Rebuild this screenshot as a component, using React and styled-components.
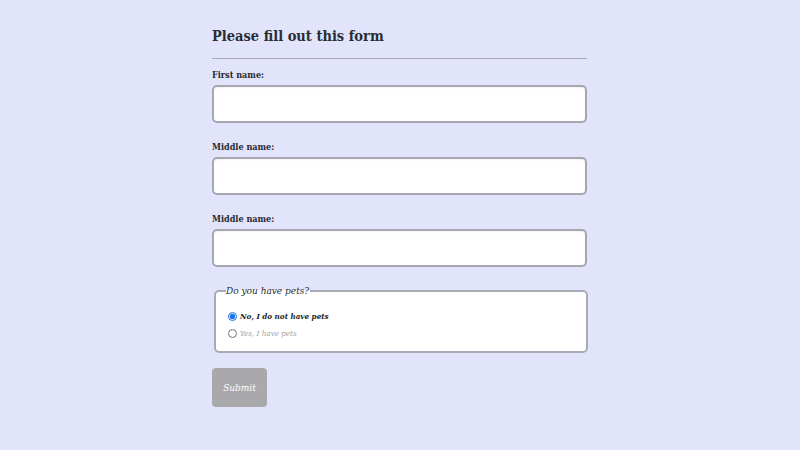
import React from "react";
import styled, { createGlobalStyle } from "styled-components";

const Global = createGlobalStyle`
  html, body { margin: 0; padding: 0; background: #e1e4fb; }
  body {
    font-family: "DejaVu Serif Condensed", "DejaVu Serif", serif;
    font-stretch: condensed;
    color: #222;
  }
`;

const Page = styled.div`
  width: 800px;
  height: 450px;
  display: flex;
  box-sizing: border-box;
  padding: 26px 0 0 212px;
`;

const Form = styled.form`
  width: 375px;
  display: flex;
  flex-direction: column;
`;

const Title = styled.h1`
  margin: 0;
  font-size: 14.5px;
  line-height: 20px;
  font-weight: bold;
  color: #2b2d35;
`;

const Rule = styled.hr`
  margin: 12px 0 0;
  border: none;
  border-top: 1px solid #a9aab4;
`;

const Field = styled.div`
  display: flex;
  flex-direction: column;
  margin-top: ${(p) => p.$top}px;
`;

const Label = styled.label`
  font-size: 9px;
  font-weight: bold;
  line-height: 12px;
  color: #2a2a2e;
  margin-bottom: 4px;
`;

const Input = styled.input`
  box-sizing: border-box;
  width: 375px;
  height: 38px;
  border: 2px solid #a6a7b3;
  border-radius: 5px;
  background: #fff;
  box-shadow: inset 0 1px 2px rgba(0,0,0,0.06);
  outline: none;
`;

const Fieldset = styled.fieldset`
  margin: 17px 0 0 2px;
  padding: 10px 10px 9px 10px;
  border: 2px solid #a9aab6;
  border-radius: 5px;
  background: #fff;
  width: 374px;
  box-sizing: border-box;
`;

const Legend = styled.legend`
  font-style: italic;
  font-size: 10px;
  line-height: 14px;
  color: #2a2a2e;
  padding: 0 1px 0 0;
`;

const Option = styled.label`
  display: flex;
  align-items: center;
  gap: 3px;
  font-style: italic;
  font-size: 8px;
  line-height: 17px;
  font-weight: ${(p) => (p.$active ? "bold" : "normal")};
  color: ${(p) => (p.$active ? "#1f1f24" : "#a3a3aa")};
`;

const Radio = styled.input`
  width: 9px;
  height: 9px;
  margin: 0 0 0 2px;
  accent-color: #1a73e8;
`;

const Submit = styled.button`
  margin-top: 15px;
  width: 55px;
  height: 39px;
  border: none;
  border-radius: 4px;
  background: #a9a9ab;
  color: #fff;
  font-family: "DejaVu Serif Condensed", "DejaVu Serif", serif;
  font-stretch: condensed;
  font-style: italic;
  font-size: 10px;
  padding: 0;
`;

export default function App() {
  return (
    <>
      <Global />
      <Page>
        <Form onSubmit={(e) => e.preventDefault()}>
          <Title>Please fill out this form</Title>
          <Rule />
          <Field $top={10}>
            <Label>First name:</Label>
            <Input type="text" />
          </Field>
          <Field $top={18}>
            <Label>Middle name:</Label>
            <Input type="text" />
          </Field>
          <Field $top={18}>
            <Label>Middle name:</Label>
            <Input type="text" />
          </Field>
          <Fieldset>
            <Legend>Do you have pets?</Legend>
            <Option $active>
              <Radio type="radio" name="pets" defaultChecked />
              No, I do not have pets
            </Option>
            <Option>
              <Radio type="radio" name="pets" />
              Yes, I have pets
            </Option>
          </Fieldset>
          <Submit type="submit">Submit</Submit>
        </Form>
      </Page>
    </>
  );
}
